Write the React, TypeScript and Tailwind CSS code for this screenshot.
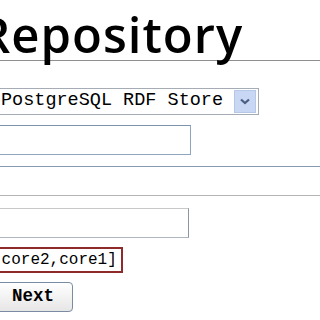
import React from 'react'

const mono = "font-['Liberation_Mono',monospace]"

const App = () => {
  return (
    <div className="w-[320px] h-[320px] overflow-hidden bg-white text-black">
      <h1 className="ml-[-21px] mt-[9px] h-[50px] text-[49px] leading-[50px] tracking-[1px] font-semibold font-['Open_Sans',sans-serif] whitespace-nowrap">
        Repository
      </h1>
      <div className="mt-[1px] h-px w-full bg-[#8f8f8f]" />

      <div className="ml-[-4px] mt-[27px] flex h-[27px] w-[263px] items-center justify-between border border-[#a5acb5] pl-[4px] pr-[2px]">
        <span className={`${mono} text-[18.5px] leading-none whitespace-nowrap`}>
          PostgreSQL RDF Store
        </span>
        <span className="flex h-[23px] w-[22px] items-center justify-center border border-[#b7c7e6] bg-[#c8d7f4]">
          <svg width="10" height="7" viewBox="0 0 10 7">
            <path d="M1 1.5 L5 5 L9 1.5" fill="none" stroke="#4b5f82" strokeWidth="2.2" />
          </svg>
        </span>
      </div>

      <div className="ml-[-4px] mt-[10px] h-[30px] w-[195px] border border-[#8fa5bf] border-t-[#7d92ad]" />

      <div className="ml-[-4px] mt-[11px] h-[30px] w-[340px] border border-[#b5b5b5] border-t-[#8799b3]" />

      <div className="ml-[-4px] mt-[12px] h-[30px] w-[193px] border border-[#b0b6bf] border-t-[#c8c8c8] border-r-[#8c96a4]" />

      <div className="ml-[-12px] mt-[9px] flex h-[26px] w-[135px] items-center border-2 border-[#8e2a2a] pl-[2px]">
        <span className={`${mono} text-[16px] leading-none whitespace-nowrap`}>[core2,core1]</span>
      </div>

      <button className="ml-[-7px] mt-[9px] flex h-[30px] w-[80px] items-center justify-center rounded-[4px] border border-[#7b8ba3] bg-gradient-to-b from-white to-[#e6e6e6]">
        <span className={`${mono} text-[17.5px] leading-none font-bold`}>Next</span>
      </button>
    </div>
  )
}

export default App
